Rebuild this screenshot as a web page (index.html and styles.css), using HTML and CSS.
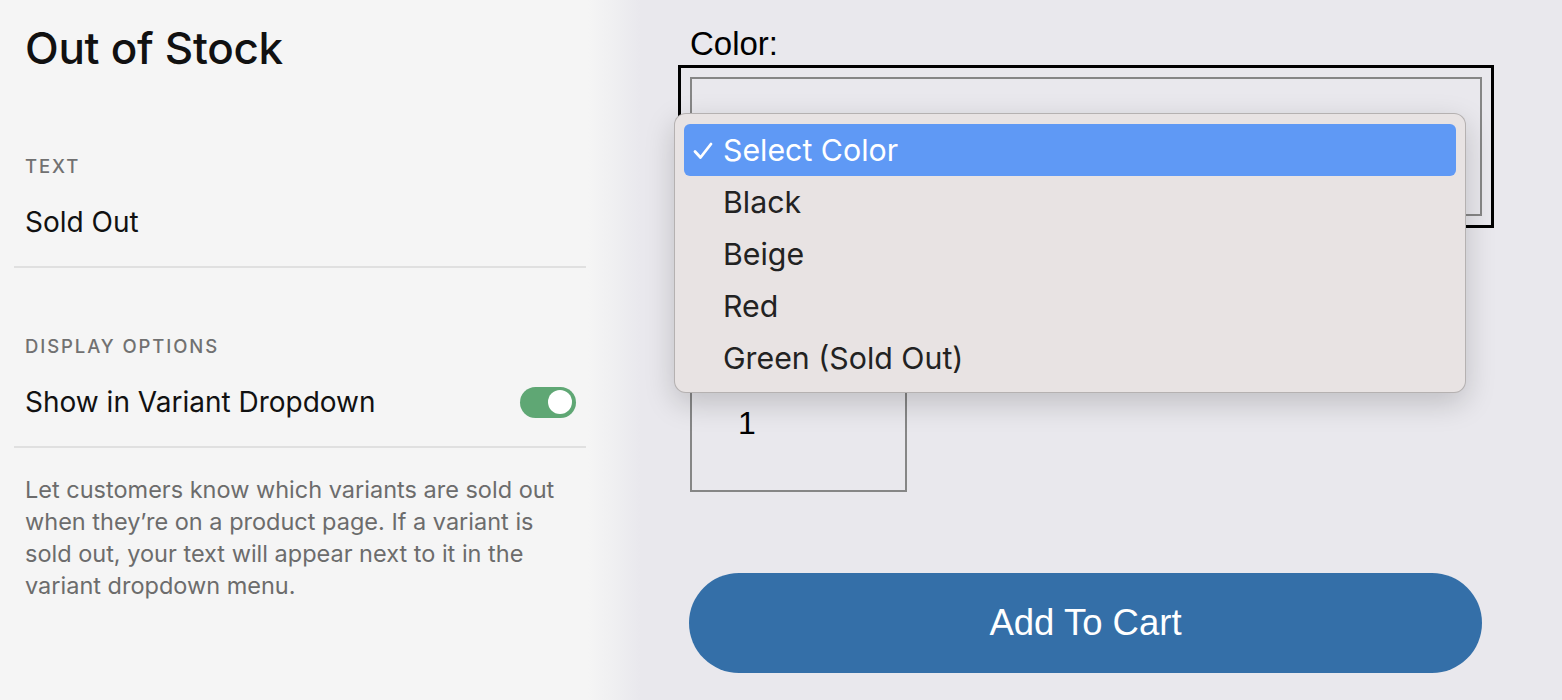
FILE: index.html
```html
<!DOCTYPE html>
<html lang="en">
<head>
<meta charset="utf-8">
<title>Out of Stock</title>
<link rel="stylesheet" href="styles.css">
</head>
<body>
<div class="app">
  <aside class="sidebar">
    <h1 class="title">Out of Stock</h1>
    <div class="label label-text">TEXT</div>
    <div class="field">Sold Out</div>
    <hr class="divider divider-1">
    <div class="label label-display">DISPLAY OPTIONS</div>
    <div class="toggle-row">
      <span>Show in Variant Dropdown</span>
      <span class="toggle"><span class="knob"></span></span>
    </div>
    <hr class="divider divider-2">
    <p class="desc">Let customers know which variants are sold out when they’re on a product page. If a variant is sold out, your text will appear next to it in the variant dropdown menu.</p>
  </aside>
  <main class="preview">
    <div class="form">
      <div class="form-label">Color:</div>
      <div class="select-wrap">
        <div class="select"></div>
        <ul class="menu">
          <li class="item selected"><svg class="check" width="20" height="18" viewBox="0 0 20 18"><path d="M2 9.5 L7.5 15.5 L18 2" fill="none" stroke="#fff" stroke-width="2.8" stroke-linecap="round" stroke-linejoin="round"/></svg>Select Color</li>
          <li class="item">Black</li>
          <li class="item">Beige</li>
          <li class="item">Red</li>
          <li class="item">Green (Sold Out)</li>
        </ul>
      </div>
      <div class="qty">1</div>
      <button class="cart">Add To Cart</button>
    </div>
  </main>
</div>
</body>
</html>
```
FILE: styles.css
```css
html, body {
  margin: 0;
  padding: 0;
}
body {
  width: 1562px;
  height: 700px;
  overflow: hidden;
  background: #e9e8ed;
}
.app {
  display: flex;
  height: 700px;
}
.sidebar {
  width: 640px;
  flex: none;
  box-sizing: border-box;
  padding: 23px 54px 0 14px;
  background: linear-gradient(to right, #f5f5f5 0, #f5f5f5 588px, #efeff1 615px, #e9e8ed 640px);
  font-family: "Inter", "Noto Sans", sans-serif;
}
.title {
  margin: 0 11px;
  font-size: 44px;
  line-height: 50px;
  font-weight: 500;
  color: #111;
  letter-spacing: -0.3px;
}
.label {
  margin: 0 11px;
  font-size: 18.5px;
  line-height: 24px;
  font-weight: 500;
  letter-spacing: 1.9px;
  color: #717171;
}
.label-text { margin-top: 81px; }
.label-display { margin-top: 66px; }
.field {
  margin: 28px 11px 0;
  font-size: 28px;
  line-height: 32px;
  color: #111;
}
.divider {
  margin: 0;
  border: none;
  height: 2px;
  background: #e0e0e0;
}
.divider-1 { margin-top: 28px; }
.divider-2 { margin-top: 28px; }
.toggle-row {
  margin: 28px 10px 0 11px;
  display: flex;
  align-items: center;
  justify-content: space-between;
  height: 32px;
  font-size: 28px;
  color: #111;
}
.toggle {
  width: 56px;
  height: 31px;
  border-radius: 16px;
  background: #5fa774;
  display: flex;
  align-items: center;
  justify-content: flex-end;
  padding-right: 4px;
  box-sizing: border-box;
}
.knob {
  width: 24px;
  height: 24px;
  border-radius: 50%;
  background: #fff;
}
.desc {
  margin: 26px 11px 0;
  max-width: 545px;
  font-size: 23.5px;
  line-height: 32px;
  color: #6c6c6c;
}
.preview {
  flex: 1;
  padding-left: 50px;
  font-family: "Liberation Sans", Arial, sans-serif;
}
.form {
  width: 792px;
  padding-top: 25px;
}
.form-label {
  font-size: 33px;
  line-height: 38px;
  color: #000;
}
.select-wrap {
  position: relative;
  margin-top: 14px;
}
.select {
  height: 139px;
  box-sizing: border-box;
  border: 2px solid #868686;
  outline: 3px solid #000;
  outline-offset: 9px;
}
.qty {
  margin-top: 138px;
  width: 217px;
  height: 138px;
  box-sizing: border-box;
  border: 2px solid #868686;
  padding-left: 46px;
  display: flex;
  align-items: center;
  font-size: 32px;
  color: #000;
}
.cart {
  display: block;
  margin-top: 81px;
  margin-left: -1px;
  width: 793px;
  height: 100px;
  border: none;
  border-radius: 50px;
  background: #346fa8;
  color: #fff;
  font-family: "Liberation Sans", Arial, sans-serif;
  font-size: 36.5px;
  padding: 0;
}
.menu {
  position: absolute;
  left: -16px;
  top: 36px;
  width: 792px;
  height: 280px;
  box-sizing: border-box;
  margin: 0;
  padding: 10px 9px;
  list-style: none;
  background: #e8e3e3;
  border: 1px solid rgba(0, 0, 0, 0.22);
  border-radius: 12px;
  box-shadow: 0 10px 30px rgba(0, 0, 0, 0.18);
  font-family: "Inter", "Noto Sans", sans-serif;
  z-index: 5;
}
.item {
  height: 52px;
  display: flex;
  align-items: center;
  padding-left: 39px;
  position: relative;
  font-size: 30.3px;
  color: #222;
  border-radius: 6px;
}
.item.selected {
  background: #5f99f5;
  color: #fff;
}
.check {
  position: absolute;
  left: 9px;
  top: 18px;
}
```
